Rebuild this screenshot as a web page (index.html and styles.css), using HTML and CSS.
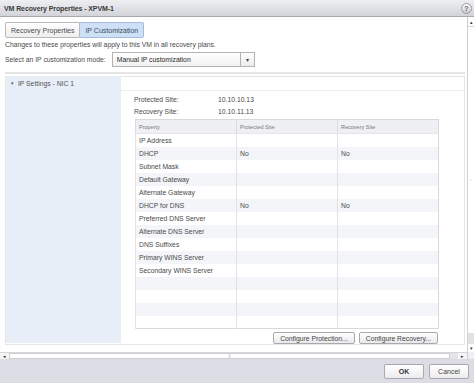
FILE: index.html
```html
<!DOCTYPE html>
<html lang="en">
<head>
    <meta charset="UTF-8">
    <title>VM Recovery Properties - XPVM-1</title>
    <link rel="stylesheet" href="styles.css">
</head>
<body>
    <div class="dialog">
        <div class="titlebar">
            <span class="title">VM Recovery Properties - XPVM-1</span>
            <span class="help">?</span>
        </div>

        <div class="main">
            <div class="content">
                <div class="body">
                    <div class="tabs">
                        <div class="tab">Recovery Properties</div>
                        <div class="tab active">IP Customization</div>
                    </div>

                    <p class="info">Changes to these properties will apply to this VM in all recovery plans.</p>

                    <div class="mode-row">
                        <span>Select an IP customization mode:</span>
                        <div class="select">
                            <span class="select-value">Manual IP customization</span>
                            <span class="select-btn">&#9662;</span>
                        </div>
                    </div>

                    <div class="separator"></div>

                    <div class="panel">
                        <div class="nav">
                            <div class="nav-item"><span class="caret">&#9662;</span> IP Settings - NIC 1</div>
                        </div>
                        <div class="detail">
                            <div class="detail-head"></div>
                            <div class="detail-body">
                                <div class="site-row"><span class="site-label">Protected Site:</span><span>10.10.10.13</span></div>
                                <div class="site-row"><span class="site-label">Recovery Site:</span><span>10.10.11.13</span></div>

                                <table class="grid">
                                    <thead>
                                        <tr><th>Property</th><th>Protected Site</th><th>Recovery Site</th></tr>
                                    </thead>
                                    <tbody>
                                        <tr><td>IP Address</td><td></td><td></td></tr>
                                        <tr><td>DHCP</td><td>No</td><td>No</td></tr>
                                        <tr><td>Subnet Mask</td><td></td><td></td></tr>
                                        <tr><td>Default Gateway</td><td></td><td></td></tr>
                                        <tr><td>Alternate Gateway</td><td></td><td></td></tr>
                                        <tr><td>DHCP for DNS</td><td>No</td><td>No</td></tr>
                                        <tr><td>Preferred DNS Server</td><td></td><td></td></tr>
                                        <tr><td>Alternate DNS Server</td><td></td><td></td></tr>
                                        <tr><td>DNS Suffixes</td><td></td><td></td></tr>
                                        <tr><td>Primary WINS Server</td><td></td><td></td></tr>
                                        <tr><td>Secondary WINS Server</td><td></td><td></td></tr>
                                        <tr><td></td><td></td><td></td></tr>
                                        <tr><td></td><td></td><td></td></tr>
                                        <tr><td></td><td></td><td></td></tr>
                                        <tr><td></td><td></td><td></td></tr>
                                    </tbody>
                                </table>

                                <div class="actions">
                                    <button class="btn">Configure Protection...</button>
                                    <button class="btn">Configure Recovery...</button>
                                </div>
                            </div>
                        </div>
                    </div>
                </div>

                <div class="hscroll">
                    <span class="arrow">&#9666;</span>
                    <span class="hthumb"><span class="grip">||</span></span>
                    <span class="htrack"></span>
                    <span class="arrow">&#9656;</span>
                </div>
            </div>

            <div class="vscroll">
                <span class="varrow up">&#9652;</span>
                <span class="vthumb"><span class="grip">::</span></span>
                <span class="vtrack"></span>
                <span class="varrow">&#9662;</span>
                <span class="corner"></span>
            </div>
        </div>

        <div class="footer">
            <button class="btn dlg-btn ok">OK</button>
            <button class="btn dlg-btn">Cancel</button>
        </div>
    </div>
</body>
</html>
```

FILE: styles.css
```css
* {
    margin: 0;
    padding: 0;
    box-sizing: border-box;
    font-family: 'Liberation Sans', Arial, sans-serif;
}

body {
    background-color: #ffffff;
    color: #4a4a4a;
    font-size: 6.8px;
}

.dialog {
    width: 474px;
    height: 383px;
    display: flex;
    flex-direction: column;
    overflow: hidden;
}

.titlebar {
    height: 17px;
    display: flex;
    align-items: center;
    justify-content: space-between;
    padding: 0 2px 0 4px;
    background: linear-gradient(#eeeff1, #d3d4d9);
    border-bottom: 1px solid #a8a9ae;
}

.title {
    font-weight: bold;
    font-size: 7px;
    color: #3a3a3a;
    letter-spacing: -0.1px;
}

.help {
    width: 11px;
    height: 11px;
    border-radius: 50%;
    border: 1px solid #9a9a9f;
    background: linear-gradient(#ffffff, #c9c9ce);
    color: #666;
    font-size: 7px;
    font-weight: bold;
    display: flex;
    align-items: center;
    justify-content: center;
}

.main {
    height: 342px;
    display: flex;
}

.content {
    flex: 1;
    display: flex;
    flex-direction: column;
}

.body {
    height: 335px;
    padding: 5px 2px 7px 5px;
}

.tabs {
    display: flex;
    height: 16px;
}

.tab {
    padding: 0 5px;
    display: flex;
    align-items: center;
    border: 1px solid #b9b9bc;
    background: linear-gradient(#ffffff, #eeeeef);
    color: #4a4a4a;
    font-size: 7px;
    border-radius: 2px 0 0 2px;
}

.tab.active {
    background: #cde0f5;
    border-color: #a3bcd9;
    border-left: none;
    border-radius: 0 2px 2px 0;
    color: #3a4a5c;
}

.info {
    margin-top: 2px;
    line-height: 9px;
}

.mode-row {
    margin-top: 3px;
    height: 15px;
    display: flex;
    align-items: center;
    gap: 6px;
}

.select {
    display: flex;
    height: 15px;
    width: 143px;
}

.select-value {
    flex: 1;
    border: 1px solid #b3b3b6;
    background: linear-gradient(#ffffff, #f1f1f2);
    padding-left: 4px;
    display: flex;
    align-items: center;
    color: #2a2a2a;
}

.select-btn {
    width: 14px;
    border: 1px solid #b3b3b6;
    border-left: none;
    background: linear-gradient(#ffffff, #ececee);
    display: flex;
    align-items: center;
    justify-content: center;
    font-size: 6px;
    color: #444;
}

.separator {
    margin-top: 5px;
    height: 2px;
    background: #e6e6e8;
}

.panel {
    margin-top: 2px;
    height: 269px;
    display: flex;
    border: 1px solid #e6e6e8;
    border-top: none;
}

.nav {
    width: 115px;
    background: #e7eef8;
    margin-bottom: 1px;
}

.nav-item {
    padding: 3px 0 0 5px;
    line-height: 9px;
    color: #555;
}

.caret {
    font-size: 5px;
    margin-right: 2px;
    vertical-align: 1px;
}

.detail {
    flex: 1;
    display: flex;
    flex-direction: column;
}

.detail-head {
    height: 15px;
    border-top: 1px solid #e6e6e8;
    border-bottom: 1px solid #ececee;
}

.detail-body {
    padding: 3px 0 0 13px;
}

.site-row {
    display: flex;
    line-height: 12px;
    height: 12px;
}

.site-label {
    width: 84px;
}

.grid {
    margin: 1px 0 0 1px;
    width: 304px;
    border-collapse: collapse;
    table-layout: fixed;
    border: 1px solid #d9d9dc;
}

.grid th {
    height: 14px;
    background: #eef0f4;
    font-weight: normal;
    font-size: 5.5px;
    color: #777;
    text-align: left;
    padding-left: 3px;
    border-left: 1px solid #dcdce0;
    border-bottom: 1px solid #e6e6ea;
}

.grid td {
    height: 13px;
    padding-left: 3px;
    border-left: 1px solid #e2e2e6;
    color: #4a4a4a;
    white-space: nowrap;
}

.grid tbody tr:nth-child(even) td {
    background: #f3f5f9;
}

.actions {
    width: 304px;
    margin-top: 3px;
    display: flex;
    justify-content: flex-end;
    gap: 4px;
}

.btn {
    height: 12px;
    padding: 0 6px;
    border: 1px solid #a9a9ad;
    border-radius: 2px;
    background: linear-gradient(#ffffff, #e9e9eb);
    color: #444;
    font-size: 6.8px;
    cursor: pointer;
}

.hscroll {
    height: 7px;
    display: flex;
    background: #e4e4e6;
    border-top: 1px solid #d6d6d8;
}

.hscroll .arrow {
    width: 9px;
    font-size: 5px;
    display: flex;
    align-items: center;
    justify-content: center;
    background: #f5f5f6;
    color: #333;
}

.hthumb {
    width: 441px;
    background: #ffffff;
    border: 1px solid #cfcfd2;
    display: flex;
    align-items: center;
    justify-content: center;
}

.grip {
    font-size: 4px;
    color: #999;
    line-height: 4px;
}

.htrack {
    flex: 1;
}

.vscroll {
    width: 7px;
    display: flex;
    flex-direction: column;
    border-left: 1px solid #cfcfd2;
    background: #ffffff;
}

.varrow {
    height: 8px;
    font-size: 5px;
    display: flex;
    align-items: center;
    justify-content: center;
    color: #333;
}

.varrow.up {
    height: 10px;
    border-bottom: 1px solid #d6d6d8;
}

.vthumb {
    height: 306px;
    display: flex;
    align-items: center;
    justify-content: center;
}

.vtrack {
    height: 11px;
    background: #e2e2e4;
}

.corner {
    flex: 1;
    background: #f0f0f2;
}

.footer {
    flex: 1;
    background: #dcdce5;
    display: flex;
    justify-content: flex-end;
    align-items: center;
    gap: 5px;
    padding: 0 5px 0 0;
}

.dlg-btn {
    width: 40px;
    height: 15px;
    font-size: 7px;
    background: linear-gradient(#ffffff, #ececee);
}

.dlg-btn.ok {
    font-weight: bold;
    color: #333;
}
```
